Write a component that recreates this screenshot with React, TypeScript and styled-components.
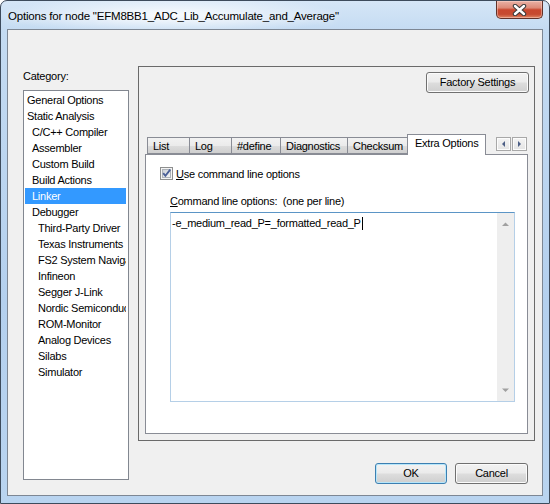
import React from "react";
import styled, { createGlobalStyle } from "styled-components";

const UI_FONT = `"Liberation Sans", Tahoma, Arial, sans-serif`;

const GlobalStyle = createGlobalStyle`
  html, body { margin: 0; padding: 0; background: #ffffff; overflow: hidden; }
  * { box-sizing: border-box; }
`;

const Window = styled.div`
  width: 550px;
  height: 504px;
  border: 1px solid #3d4b5c;
  border-radius: 7px 7px 0 0;
  background:
    radial-gradient(ellipse 230px 26px at 170px 14px, rgba(255,255,255,0.9), rgba(255,255,255,0) 75%),
    linear-gradient(180deg, #d5e6f7 0%, #c4dbf2 30px, #b4d0ee 60%, #b9d4f0 100%);
  display: flex;
  flex-direction: column;
  overflow: hidden;
  font-family: ${UI_FONT};
  font-size: 11px;
  letter-spacing: -0.25px;
  color: #000;
`;

const TitleBar = styled.div`
  height: 28px;
  flex: none;
  display: flex;
  align-items: flex-start;
  padding-left: 7px;
`;

const TitleText = styled.div`
  align-self: center;
  margin-top: 1px;
  font-family: ${UI_FONT};
  font-size: 11.5px;
  letter-spacing: -0.2px;
  color: #000;
  white-space: nowrap;
  text-shadow: 0 0 8px rgba(255,255,255,0.9);
`;

const CloseButton = styled.div`
  margin-left: auto;
  margin-right: 6px;
  width: 47px;
  height: 18px;
  border: 1px solid #61322a;
  border-top: none;
  border-radius: 0 0 5px 5px;
  background: linear-gradient(180deg, #eab2a6 0%, #dd8a78 40%, #c9472e 52%, #c64a30 78%, #df8563 100%);
  box-shadow: inset 0 0 0 1px rgba(255,220,210,0.45);
  display: flex;
  align-items: center;
  justify-content: center;
`;

const Client = styled.div`
  margin: 0 6px;
  height: 467px;
  flex: none;
  border: 1px solid #7d8794;
  background: #f0f0f0;
  display: grid;
  grid-template-columns: 121px 397px;
  column-gap: 9px;
  align-items: start;
  padding-top: 36px;
`;

const LeftColumn = styled.div`
  padding-left: 15px;
  display: flex;
  flex-direction: column;
`;

const Label = styled.div<{ $indent?: number; $top?: number }>`
  line-height: 13px;
  height: 13px;
  white-space: pre;
  margin-left: ${(p) => p.$indent ?? 0}px;
  margin-top: ${(p) => p.$top ?? 0}px;
`;

const ListBox = styled.div`
  margin-top: 7px;
  width: 106px;
  height: 390px;
  border: 1px solid #828790;
  background: #fff;
  padding: 1px;
  overflow: hidden;
`;

const ListItem = styled.div<{ $level: number; $selected?: boolean }>`
  height: 16px;
  line-height: 16px;
  width: 101px;
  padding-left: ${(p) => [2, 7, 13][p.$level]}px;
  white-space: nowrap;
  overflow: hidden;
  background: ${(p) => (p.$selected ? "#3399ff" : "transparent")};
  color: ${(p) => (p.$selected ? "#fff" : "#000")};
`;

const RightColumn = styled.div`
  display: flex;
  flex-direction: column;
`;

const Panel = styled.div`
  height: 375px;
  border: 1px solid #6a6a6a;
  padding: 5px 6px 6px 6px;
  display: flex;
  flex-direction: column;
`;

const PanelTop = styled.div`
  display: flex;
  justify-content: flex-end;
  margin-right: -1px;
`;

const Button = styled.div<{ $w: number; $default?: boolean }>`
  width: ${(p) => p.$w}px;
  height: 21px;
  border: 1px solid ${(p) => (p.$default ? "#3c7fb1" : "#707070")};
  border-radius: 3px;
  background: linear-gradient(180deg, #f2f2f2 0%, #ebebeb 48%, #dddddd 52%, #cfcfcf 100%);
  box-shadow: inset 0 0 0 1px ${(p) => (p.$default ? "#b7e6fa" : "#fbfbfb")};
  display: flex;
  align-items: center;
  justify-content: center;
  line-height: 13px;
  white-space: nowrap;
`;

const TabStrip = styled.div`
  margin-top: 41px;
  height: 21px;
  margin-bottom: -1px;
  padding-left: 2px;
  display: flex;
  align-items: flex-end;
  position: relative;
  z-index: 1;
`;

const Tab = styled.div<{ $w: number; $active?: boolean; $first?: boolean }>`
  width: ${(p) => p.$w}px;
  height: ${(p) => (p.$active ? 21 : 17)}px;
  margin-bottom: ${(p) => (p.$active ? 0 : 1)}px;
  margin-left: ${(p) => (p.$first ? 0 : p.$active ? -2 : -1)}px;
  border: 1px solid #898c95;
  border-bottom: ${(p) => (p.$active ? "none" : "1px solid #898c95")};
  background: ${(p) =>
    p.$active ? "#ffffff" : "linear-gradient(180deg, #f2f2f2 0%, #ebebeb 50%, #dddddd 51%, #cfcfcf 100%)"};
  padding-left: ${(p) => (p.$active ? 7 : 5)}px;
  padding-top: 2px;
  line-height: 13px;
  white-space: nowrap;
  overflow: hidden;
`;

const TabScroll = styled.div`
  margin-left: auto;
  margin-right: 1px;
  align-self: flex-start;
  margin-top: 3px;
  display: flex;
  gap: 1px;
`;

const ScrollBtn = styled.div`
  width: 15px;
  height: 14px;
  border: 1px solid #a8a8a8;
  background: linear-gradient(180deg, #f4f4f4 0%, #e4e4e4 100%);
  box-shadow: inset 0 0 0 1px #fcfcfc;
  display: flex;
  align-items: center;
  justify-content: center;
`;

const Page = styled.div`
  flex: 1;
  border: 1px solid #898c95;
  background: #fff;
  padding: 12px 0 0 14px;
  display: flex;
  flex-direction: column;
`;

const CheckRow = styled.div`
  display: flex;
  align-items: center;
  gap: 3px;
  height: 13px;
`;

const EditBox = styled.div`
  margin-top: 4px;
  margin-left: 10px;
  width: 345px;
  height: 190px;
  border: 1px solid #b5cfe7;
  border-top-color: #5b95c6;
  display: flex;
`;

const EditText = styled.div`
  flex: 1;
  padding: 4px 0 0 1px;
  line-height: 13px;
  white-space: nowrap;
  display: flex;
  align-items: flex-start;
`;

const Caret = styled.span`
  display: inline-block;
  width: 1px;
  height: 13px;
  margin-left: 1px;
  background: #000;
`;

const VScroll = styled.div`
  width: 17px;
  background: #eeeeee;
  display: flex;
  flex-direction: column;
  justify-content: space-between;
  align-items: center;
  padding: 9px 0 8px;
`;

const Footer = styled.div`
  margin-top: 22px;
  padding-right: 7px;
  display: flex;
  justify-content: flex-end;
  gap: 8px;
`;

const categories: { text: string; level: number; selected?: boolean }[] = [
  { text: "General Options", level: 0 },
  { text: "Static Analysis", level: 0 },
  { text: "C/C++ Compiler", level: 1 },
  { text: "Assembler", level: 1 },
  { text: "Custom Build", level: 1 },
  { text: "Build Actions", level: 1 },
  { text: "Linker", level: 1, selected: true },
  { text: "Debugger", level: 1 },
  { text: "Third-Party Driver", level: 2 },
  { text: "Texas Instruments", level: 2 },
  { text: "FS2 System Navigator", level: 2 },
  { text: "Infineon", level: 2 },
  { text: "Segger J-Link", level: 2 },
  { text: "Nordic Semiconductor", level: 2 },
  { text: "ROM-Monitor", level: 2 },
  { text: "Analog Devices", level: 2 },
  { text: "Silabs", level: 2 },
  { text: "Simulator", level: 2 },
];

const tabs: { text: string; w: number; active?: boolean }[] = [
  { text: "List", w: 43 },
  { text: "Log", w: 43 },
  { text: "#define", w: 50 },
  { text: "Diagnostics", w: 68 },
  { text: "Checksum", w: 62 },
  { text: "Extra Options", w: 79, active: true },
];

const CloseX = () => (
  <svg width="15" height="12" viewBox="0 0 15 12">
    <path d="M3 2 L12 10 M12 2 L3 10" stroke="#3a3a3a" strokeWidth="4.4" strokeLinecap="round" fill="none" />
    <path d="M3 2 L12 10 M12 2 L3 10" stroke="#ffffff" strokeWidth="2.4" strokeLinecap="round" fill="none" />
  </svg>
);

const CheckBoxIcon = () => (
  <svg width="13" height="13" viewBox="0 0 13 13">
    <defs>
      <linearGradient id="cbg" x1="0" y1="0" x2="1" y2="1">
        <stop offset="0" stopColor="#cbcfd5" />
        <stop offset="1" stopColor="#f6f6f6" />
      </linearGradient>
    </defs>
    <rect x="0.5" y="0.5" width="12" height="12" fill="#f4f4f4" stroke="#8e8f8f" />
    <rect x="2.5" y="2.5" width="8" height="8" fill="url(#cbg)" stroke="#aeb3b9" />
    <path d="M3.2 6.2 L5.4 8.8 L10.2 2.6" stroke="#4a5f97" strokeWidth="1.8" fill="none" />
  </svg>
);

const Tri = ({ dir, color }: { dir: "l" | "r" | "u" | "d"; color: string }) => {
  const d = {
    l: "M4 0 L4 6 L1 3 Z",
    r: "M1 0 L1 6 L4 3 Z",
    u: "M0 4 L7 4 L3.5 0.5 Z",
    d: "M0 0.5 L7 0.5 L3.5 4 Z",
  }[dir];
  const horiz = dir === "l" || dir === "r";
  return (
    <svg width={horiz ? 5 : 7} height={horiz ? 6 : 5} viewBox={horiz ? "0 0 5 6" : "0 0 7 5"}>
      <path d={d} fill={color} />
    </svg>
  );
};

export default function App() {
  return (
    <>
      <GlobalStyle />
      <Window>
        <TitleBar>
          <TitleText>Options for node "EFM8BB1_ADC_Lib_Accumulate_and_Average"</TitleText>
          <CloseButton>
            <CloseX />
          </CloseButton>
        </TitleBar>
        <Client>
          <LeftColumn>
            <Label $top={4}>Category:</Label>
            <ListBox>
              {categories.map((c) => (
                <ListItem key={c.text} $level={c.level} $selected={c.selected}>
                  {c.text}
                </ListItem>
              ))}
            </ListBox>
          </LeftColumn>
          <RightColumn>
            <Panel>
              <PanelTop>
                <Button $w={103}>Factory Settings</Button>
              </PanelTop>
              <TabStrip>
                {tabs.map((t, i) => (
                  <Tab key={t.text} $w={t.w} $active={t.active} $first={i === 0}>
                    {t.text}
                  </Tab>
                ))}
                <TabScroll>
                  <ScrollBtn>
                    <Tri dir="l" color="#4d5f86" />
                  </ScrollBtn>
                  <ScrollBtn>
                    <Tri dir="r" color="#4d5f86" />
                  </ScrollBtn>
                </TabScroll>
              </TabStrip>
              <Page>
                <CheckRow>
                  <CheckBoxIcon />
                  <span>
                    <u>U</u>se command line options
                  </span>
                </CheckRow>
                <Label $indent={10} $top={15}>
                  <u>C</u>ommand line options:  (one per line)
                </Label>
                <EditBox>
                  <EditText>
                    -e_medium_read_P=_formatted_read_P
                    <Caret />
                  </EditText>
                  <VScroll>
                    <Tri dir="u" color="#a0a0a0" />
                    <Tri dir="d" color="#a0a0a0" />
                  </VScroll>
                </EditBox>
              </Page>
            </Panel>
            <Footer>
              <Button $w={72} $default>
                OK
              </Button>
              <Button $w={73}>Cancel</Button>
            </Footer>
          </RightColumn>
        </Client>
      </Window>
    </>
  );
}
